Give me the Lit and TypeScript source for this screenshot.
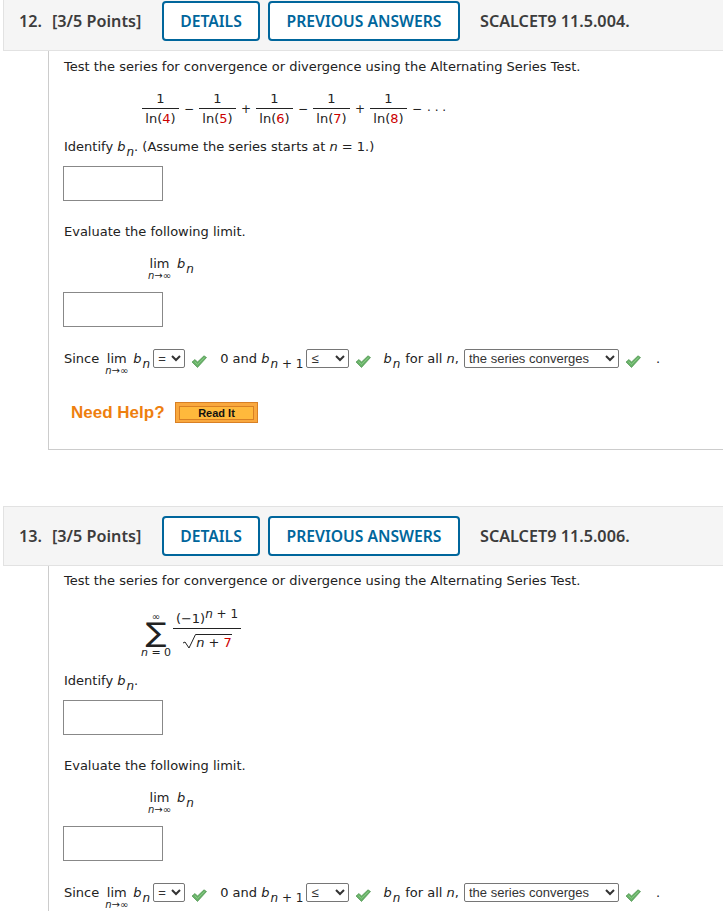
import { LitElement, html, css } from "lit";
import { customElement } from "lit/decorators.js";

const check = html`<svg class="check" viewBox="0 0 16 13" width="16" height="13">
  <path d="M1 7 L4 4.5 L6.5 7 L13 .8 L15.5 2.5 L6.5 12.5 Z" fill="#68b268" stroke="#4f9350" stroke-width=".7"></path>
  <path d="M3.5 6.6 L6.5 9.4 L13.6 2.4" fill="none" stroke="#8fcf8c" stroke-width=".8"></path>
</svg>`;

const sub = (t: string) => html`<span class="sub"><i>${t}</i></span>`;
const bn = html`<span class="bn"><i>b</i>${sub("n")}</span>`;

const frac = (d: string) => html`<span class="frac">
  <span class="num">1</span>
  <span class="den">ln(<span class="red">${d}</span>)</span>
</span>`;

@customElement("app-root")
export class AppRoot extends LitElement {
  static styles = css`
    :host {
      display: block;
      height: 911px;
      overflow: hidden;
      font-family: "DejaVu Sans", Verdana, sans-serif;
      font-size: 13px;
      color: #222;
    }
    .page {
      margin-top: -9px;
    }
    .q + .q {
      margin-top: 56px;
    }
    .head {
      display: flex;
      align-items: center;
      height: 58px;
      margin-left: 3px;
      padding-left: 15px;
      background: #f5f5f5;
      border: 1px solid #e2e2e2;
      border-right: 0;
      font-family: "Noto Sans", "Open Sans", sans-serif;
      font-weight: 600;
      font-size: 16.2px;
      color: #3c3c3c;
    }
    .no {
      width: 33px;
    }
    .pts {
      width: 110px;
    }
    .btn {
      box-sizing: border-box;
      height: 40px;
      display: flex;
      align-items: center;
      justify-content: center;
      border: 2px solid #00669c;
      border-radius: 4px;
      background: #fff;
      color: #00669c;
      font-size: 15.7px;
    }
    .b1 {
      width: 98px;
      margin-right: 8px;
    }
    .b2 {
      width: 192px;
      margin-right: 20px;
    }
    .body {
      margin-left: 48px;
      padding-left: 15px;
      border-left: 1px solid #ccc;
      border-bottom: 1px solid #ccc;
      line-height: 16px;
    }
    .q13 .body {
      border-bottom: 0;
      padding-bottom: 30px;
    }
    .intro {
      padding-top: 8px;
    }
    .q13 .intro {
      padding-top: 7px;
    }
    .series {
      display: flex;
      align-items: center;
      height: 40px;
      margin: 14px 0 0 78px;
    }
    .frac {
      display: flex;
      flex-direction: column;
      width: 37px;
      text-align: center;
      font-size: 13px;
    }
    .num {
      height: 18px;
      line-height: 17px;
      border-bottom: 1px solid #222;
    }
    .den {
      height: 20px;
      line-height: 19px;
      white-space: nowrap;
    }
    .op {
      width: 20px;
      text-align: center;
      font-size: 12px;
    }
    .dots {
      margin-bottom: 5px;
      font-size: 12px;
    }
    .red {
      color: #c00;
    }
    .line {
      margin-top: 10px;
    }
    .q13 .line.id {
      margin-top: 11px;
    }
    .sub {
      position: relative;
      top: 5px;
      margin-left: 1px;
      font-size: 12px;
    }
    .bn {
      white-space: nowrap;
    }
    .box {
      box-sizing: border-box;
      width: 100px;
      height: 35px;
      border: 1px solid #888;
      background: #fff;
      margin: 11px 0 0 -1px;
    }
    .eval {
      margin-top: 23px;
    }
    .lim {
      display: flex;
      margin: 16px 0 0 84px;
      height: 36px;
    }
    .limword {
      display: flex;
      flex-direction: column;
      align-items: center;
      margin-right: 6px;
    }
    .limword span:first-child {
      line-height: 15px;
    }
    .under {
      font-size: 10px;
      line-height: 10px;
    }
    .box.second {
      margin-top: 0;
    }
    .since {
      display: flex;
      align-items: flex-start;
      height: 20px;
      margin-top: 22px;
      white-space: nowrap;
    }
    .since > span {
      line-height: 19px;
    }
    .since .limword {
      margin: 0 5px 0 6px;
      padding-top: 2px;
      line-height: 15px;
    }
    select {
      box-sizing: border-box;
      height: 19px;
      padding: 0;
      border: 1px solid #767676;
      border-radius: 2px;
      background: #fff;
      color: #333;
      font-family: "Liberation Sans", Arial, sans-serif;
      font-size: 13px;
    }
    .s1 {
      width: 32px;
      margin-left: 3px;
    }
    .s2 {
      width: 43px;
      margin-left: 3px;
    }
    .s3 {
      width: 155px;
      margin-left: 5px;
    }
    .check {
      flex: none;
      margin: 6px 0 0 6px;
    }
    .gap-and {
      margin-left: 13px;
    }
    .gap-b {
      margin-left: 12px;
    }
    .gap-for {
      margin-left: 5px;
    }
    .gap-dot {
      margin-left: 15px;
    }
    .help {
      display: flex;
      align-items: center;
      height: 21px;
      margin: 33px 0 26px 7px;
      font-family: "Liberation Sans", Arial, sans-serif;
    }
    .need {
      width: 104px;
      font-size: 17px;
      font-weight: 700;
      color: #ee7f0f;
    }
    .read {
      box-sizing: border-box;
      width: 83px;
      height: 21px;
      padding: 3px 3px 2px;
      border: 1px solid #d98024;
      background: #f9a83e;
      font-size: 11px;
      font-weight: 700;
      color: #111;
    }
    .read span {
      box-sizing: border-box;
      display: flex;
      align-items: center;
      justify-content: center;
      height: 100%;
      border: 1px solid #d98024;
      background: #ffb93c;
    }
    .sum {
      display: flex;
      margin: 13px 0 0 78px;
      height: 60px;
    }
    .sigma {
      display: flex;
      flex-direction: column;
      align-items: center;
      width: 28px;
      padding-top: 10px;
      font-size: 10px;
      line-height: 10px;
    }
    .sigma b {
      font-weight: 400;
      font-size: 27px;
      line-height: 22px;
      margin-bottom: 3px;
      transform: scaleX(1.15);
    }
    .sigma i {
      font-style: normal;
      font-size: 11px;
      line-height: 12px;
      white-space: nowrap;
    }
    .bigfrac {
      display: flex;
      flex-direction: column;
      align-items: center;
      width: 68px;
      margin-left: 3px;
      font-size: 13px;
    }
    .bigfrac .top {
      height: 26px;
      line-height: 33px;
      width: 100%;
      text-align: center;
      border-bottom: 1px solid #222;
      white-space: nowrap;
    }
    .sup {
      position: relative;
      top: -5px;
      font-size: 12px;
    }
    .rad {
      display: flex;
      align-items: flex-start;
      margin-top: 5px;
    }
    .rad span {
      border-top: 1px solid #222;
      line-height: 15px;
      width: 36px;
      text-align: center;
    }
    .rad svg {
      flex: none;
    }
  `;

  private lim() {
    return html`<span class="limword"><span>lim</span><span class="under"><i>n</i>→∞</span></span>`;
  }

  private tail() {
    return html`
      <div class="line eval">Evaluate the following limit.</div>
      <div class="lim">${this.lim()}${bn}</div>
      <div class="box second"></div>
      <div class="since">
        <span>Since</span>${this.lim()}${bn}
        <select class="s1"><option>=</option></select>
        ${check}
        <span class="gap-and">0 and <span class="bn"><i>b</i><span class="sub"><i>n</i> + 1</span></span></span>
        <select class="s2"><option>≤</option></select>
        ${check}
        <span class="gap-b">${bn}</span>
        <span class="gap-for">for all <i>n</i>,</span>
        <select class="s3"><option>the series converges</option></select>
        ${check}
        <span class="gap-dot">.</span>
      </div>
    `;
  }

  private header(no: string, code: string) {
    return html`<div class="head">
      <span class="no">${no}</span>
      <span class="pts">[3/5 Points]</span>
      <span class="btn b1">DETAILS</span>
      <span class="btn b2">PREVIOUS ANSWERS</span>
      <span>${code}</span>
    </div>`;
  }

  render() {
    return html`<div class="page">
      <section class="q">
        ${this.header("12.", "SCALCET9 11.5.004.")}
        <div class="body">
          <div class="intro">Test the series for convergence or divergence using the Alternating Series Test.</div>
          <div class="series">
            ${frac("4")}<span class="op">−</span>${frac("5")}<span class="op">+</span>${frac("6")}<span class="op">−</span>${frac("7")}<span class="op">+</span>${frac("8")}<span class="op">−</span>
            <span class="dots">. . .</span>
          </div>
          <div class="line">Identify ${bn}. (Assume the series starts at <i>n</i> = 1.)</div>
          <div class="box"></div>
          ${this.tail()}
          <div class="help">
            <span class="need">Need Help?</span>
            <span class="read"><span>Read It</span></span>
          </div>
        </div>
      </section>
      <section class="q q13">
        ${this.header("13.", "SCALCET9 11.5.006.")}
        <div class="body">
          <div class="intro">Test the series for convergence or divergence using the Alternating Series Test.</div>
          <div class="sum">
            <span class="sigma">∞<b>∑</b><i><em>n</em> = 0</i></span>
            <span class="bigfrac">
              <span class="top">(−1)<span class="sup"><i>n</i> + 1</span></span>
              <span class="rad">
                <svg viewBox="0 0 14 15" width="14" height="15"><polyline points="1,9 3,8 7,14 13.5,.5 14,.5" fill="none" stroke="#222"></polyline></svg>
                <span><i>n</i> + <span class="red">7</span></span>
              </span>
            </span>
          </div>
          <div class="line id">Identify ${bn}.</div>
          <div class="box"></div>
          ${this.tail()}
        </div>
      </section>
    </div>`;
  }
}
